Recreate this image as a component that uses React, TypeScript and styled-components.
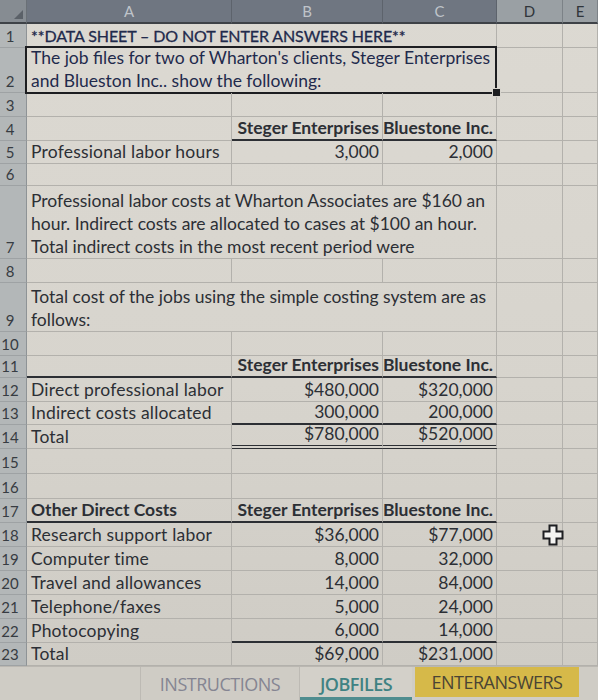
import React from 'react';
import styled, { createGlobalStyle, css } from 'styled-components';

const Global = createGlobalStyle`
  html, body { margin: 0; padding: 0; background: #d5d2cb; }
  body { width: 598px; height: 700px; overflow: hidden; font-family: Lato, "Liberation Sans", sans-serif; }
  #root { width: 598px; height: 700px; }
`;

const COLS = '27px 205px 151px 114px 66px 35px';
const GRID = '#b3b1ac';
const INK = '#2c2f35';
const NAVY = '#1f2a4c';

const Frame = styled.div`
  position: relative;
  width: 598px;
  height: 700px;
  display: flex;
  flex-direction: column;
  overflow: hidden;
  background: linear-gradient(180deg, #dcd9d2 0%, #d7d4cd 55%, #cecbc4 100%);
`;

const Sheet = styled.div<{ $rows: string }>`
  display: grid;
  grid-template-columns: ${COLS};
  grid-template-rows: ${(p) => p.$rows};
`;

const Corner = styled.div`
  position: relative;
  background: #868c92;
  border-right: 1px solid #6a7076;
  border-bottom: 2px solid #3e4247;
  &::after {
    content: '';
    position: absolute;
    right: 3px;
    bottom: 3px;
    width: 0;
    height: 0;
    border-left: 9px solid transparent;
    border-bottom: 9px solid #5b6168;
  }
`;

const ColHead = styled.div<{ $active?: boolean }>`
  display: flex;
  align-items: center;
  justify-content: center;
  font-size: 15px;
  background: ${(p) => (p.$active ? '#6f7681' : '#9aa0a4')};
  color: ${(p) => (p.$active ? '#bfc4ca' : '#30353a')};
  border-right: 1px solid ${(p) => (p.$active ? '#5d636c' : '#7c8287')};
  border-bottom: 2px solid #3e4247;
`;

const RowHead = styled.div`
  display: flex;
  align-items: flex-end;
  justify-content: center;
  padding: 0 6px 1px 0;
  font-size: 15px;
  line-height: 20px;
  color: #373c42;
  background: #b3b7b8;
  border-right: 1px solid #8e9396;
  border-bottom: 1px solid #9ea2a4;
`;

type Border = 'thin' | 'double' | undefined;

const Cell = styled.div<{
  $span?: number;
  $align?: 'left' | 'right';
  $bold?: boolean;
  $bb?: Border;
  $navy?: boolean;
  $label?: boolean;
}>`
  position: relative;
  grid-column: span ${(p) => p.$span || 1};
  display: flex;
  flex-direction: column;
  justify-content: flex-end;
  align-items: ${(p) => (p.$align === 'right' ? 'flex-end' : 'flex-start')};
  padding: 0 3px 0 4px;
  font-size: 17.5px;
  line-height: 23px;
  white-space: nowrap;
  color: ${(p) => (p.$navy ? NAVY : INK)};
  font-weight: ${(p) => (p.$bold ? 700 : 400)};
  letter-spacing: ${(p) => (p.$label && !p.$bold ? '0.2px' : '0')};
  border-right: 1px solid ${GRID};
  ${(p) =>
    p.$bb === 'thin'
      ? css`border-bottom: 2px solid #2c2f34;`
      : p.$bb === 'double'
      ? css`border-bottom: 4px double #2c2f34;`
      : css`border-bottom: 1px solid ${GRID};`}
`;

const Selected = styled(Cell)`
  &::after {
    content: '';
    position: absolute;
    left: -2px;
    top: -2px;
    right: -1px;
    bottom: -2px;
    border: 2.5px solid #1d1e21;
    pointer-events: none;
  }
  &::before {
    content: '';
    position: absolute;
    right: -5px;
    bottom: -5px;
    width: 7px;
    height: 7px;
    background: #1d1e21;
    border: 1px solid #d8d5ce;
    z-index: 2;
  }
`;

const Title = styled(Cell)`
  font-size: 16px;
  letter-spacing: -0.1px;
  font-weight: 400;
  -webkit-text-stroke: 0.3px ${NAVY};
`;

const TabBar = styled.div`
  flex: 1;
  display: flex;
  align-items: stretch;
  background: #cfccc5;
  border-top: 1px solid #bab7b1;
`;

const TabSpacer = styled.div`
  width: 140px;
  border-right: 1px solid #bdbab4;
`;

const Tab = styled.div<{ $kind: 'plain' | 'active' | 'gold' }>`
  display: flex;
  align-items: center;
  justify-content: center;
  font-family: "Open Sans", Lato, sans-serif;
  font-size: 18px;
  letter-spacing: -0.5px;
  ${(p) =>
    p.$kind === 'plain' &&
    css`
      width: 158px;
      color: #858592;
      border-right: 1px solid #bdbab4;
    `}
  ${(p) =>
    p.$kind === 'active' &&
    css`
      width: 112px;
      color: #3f8283;
      font-weight: 600;
      box-shadow: inset 0 -3px 0 #4f8d8f;
      background: #d3d0c9;
    `}
  ${(p) =>
    p.$kind === 'gold' &&
    css`
      width: 164px;
      margin: 0 0 3px 3px;
      color: #4a4434;
      background: #d6b949;
    `}
`;

const Cursor = styled.svg`
  position: absolute;
  left: 542px;
  top: 524px;
  width: 22px;
  height: 22px;
`;

type C = { t?: string; a?: 'left' | 'right'; b?: boolean; bb?: Border; span?: number; l?: boolean };
type R = { n: number; h: number; cells: C[]; kind?: 'title' | 'sel' };

const row = (n: number, h: number, cells: C[], kind?: R['kind']): R => ({ n, h, cells, kind });
const E: C = {};
const hdr = (bb?: Border): C[] => [
  { t: 'Steger Enterprises', a: 'right', b: true, bb },
  { t: 'Bluestone Inc.', a: 'right', b: true, bb },
];
const money = (label: string, x: string, y: string, bb?: Border): C[] => [
  { t: label, l: true },
  { t: x, a: 'right', bb },
  { t: y, a: 'right', bb },
];

const rows: R[] = [
  row(1, 24, [{ t: '**DATA SHEET – DO NOT ENTER ANSWERS HERE**', span: 3 }], 'title'),
  row(2, 45, [{ t: "The job files for two of Wharton's clients, Steger Enterprises\nand Blueston Inc.. show the following:", span: 3 }], 'sel'),
  row(3, 24, [E, E, E]),
  row(4, 24, [E, ...hdr('thin')]),
  row(5, 23, [{ t: 'Professional labor hours', l: true }, { t: '3,000', a: 'right' }, { t: '2,000', a: 'right' }]),
  row(6, 22, [E, E, E]),
  row(7, 73, [
    {
      t: 'Professional labor costs at Wharton Associates are $160 an\nhour. Indirect costs are allocated to cases at $100 an hour.\nTotal indirect costs in the most recent period were',
      span: 3,
    },
  ]),
  row(8, 24, [E, E, E]),
  row(9, 49, [{ t: 'Total cost of the jobs using the simple costing system are as\nfollows:', span: 3 }]),
  row(10, 24, [E, E, E]),
  row(11, 22, [{ bb: 'thin' }, ...hdr('thin')]),
  row(12, 24, money('Direct professional labor', '$480,000', '$320,000')),
  row(13, 23, money('Indirect costs allocated', '300,000', '200,000', 'thin')),
  row(14, 24, money('Total', '$780,000', '$520,000', 'double')),
  row(15, 25, [E, E, E]),
  row(16, 25, [E, E, E]),
  row(17, 24, [{ t: 'Other Direct Costs', b: true, bb: 'thin' }, ...hdr('thin')]),
  row(18, 24, money('Research support labor', '$36,000', '$77,000')),
  row(19, 24, money('Computer time', '8,000', '32,000')),
  row(20, 24, money('Travel and allowances', '14,000', '84,000')),
  row(21, 24, money('Telephone/faxes', '5,000', '24,000')),
  row(22, 24, money('Photocopying', '6,000', '14,000', 'thin')),
  row(23, 23, money('Total', '$69,000', '$231,000')),
];

const Lines: React.FC<{ text?: string }> = ({ text }) => (
  <>
    {(text || '').split('\n').map((l, i) => (
      <span key={i}>{l || '\u00a0'}</span>
    ))}
  </>
);

export default function App() {
  const template = ['24px', ...rows.map((r) => `${r.h}px`)].join(' ');
  return (
    <Frame>
      <Global />
      <Sheet $rows={template}>
        <Corner />
        <ColHead $active>A</ColHead>
        <ColHead $active>B</ColHead>
        <ColHead $active>C</ColHead>
        <ColHead>D</ColHead>
        <ColHead>E</ColHead>
        {rows.map((r) => (
          <React.Fragment key={r.n}>
            <RowHead>{r.n}</RowHead>
            {r.cells.map((c, i) => {
              const props = {
                key: i,
                $span: c.span,
                $align: c.a,
                $bold: c.b,
                $bb: c.bb,
                $label: c.l,
                $navy: r.kind === 'title' || r.kind === 'sel',
              };
              if (r.kind === 'sel')
                return (
                  <Selected {...props}>
                    <Lines text={c.t} />
                  </Selected>
                );
              if (r.kind === 'title')
                return (
                  <Title {...props}>
                    <Lines text={c.t} />
                  </Title>
                );
              return (
                <Cell {...props}>
                  <Lines text={c.t} />
                </Cell>
              );
            })}
            <Cell />
            <Cell />
          </React.Fragment>
        ))}
      </Sheet>
      <TabBar>
        <TabSpacer />
        <Tab $kind="plain">INSTRUCTIONS</Tab>
        <Tab $kind="active">JOBFILES</Tab>
        <Tab $kind="gold">ENTERANSWERS</Tab>
      </TabBar>
      <Cursor viewBox="0 0 22 22">
        <path
          d="M7.5 1.5 H14.5 V7.5 H20.5 V14.5 H14.5 V20.5 H7.5 V14.5 H1.5 V7.5 H7.5 Z"
          fill="#f4f4f2"
          stroke="#1e1f22"
          strokeWidth="2"
          strokeLinejoin="miter"
        />
      </Cursor>
    </Frame>
  );
}
